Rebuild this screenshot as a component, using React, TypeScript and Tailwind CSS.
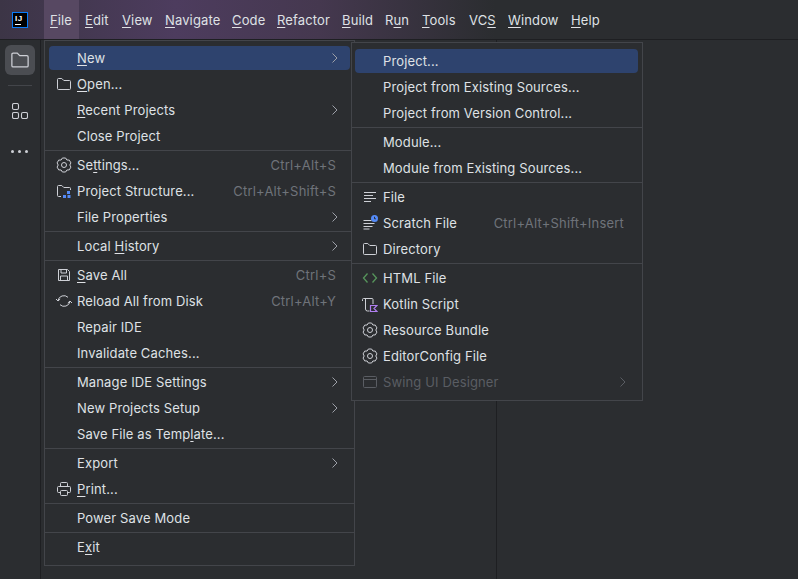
import type { ReactNode } from 'react';

const STROKE = '#ced0d6';

// 16x16 line icon wrapper
function Ico({ children, size = 16 }: { children: ReactNode; size?: number }) {
  return (
    <svg width={size} height={size} viewBox="0 0 16 16" fill="none" stroke={STROKE} strokeWidth="1" className="shrink-0">
      {children}
    </svg>
  );
}

const FolderIcon = ({ size = 16 }: { size?: number }) => (
  <Ico size={size}>
    <path d="M1.5 12.5v-9a1 1 0 0 1 1-1h3.3l2 2h5.7a1 1 0 0 1 1 1v7a1 1 0 0 1-1 1h-11a1 1 0 0 1-1-1z" />
  </Ico>
);

const GearIcon = () => (
  <Ico>
    <path
      strokeLinejoin="round"
      d="M6.4 1L9.6 1L10.9 3L13.3 3.1L14.9 5.9L13.8 8L14.9 10.1L13.3 12.9L10.9 13L9.6 15L6.4 15L5.1 13L2.7 12.9L1.1 10.1L2.2 8L1.1 5.9L2.7 3.1L5.1 3Z"
    />
    <circle cx="8" cy="8" r="2.5" />
  </Ico>
);

const StructureIcon = () => (
  <Ico>
    <path d="M5 13.5H2.5a1 1 0 0 1-1-1v-9a1 1 0 0 1 1-1h3.3l2 2h5.7a1 1 0 0 1 1 1V7" />
    <rect x="11" y="8" width="3" height="3" fill="#548af7" stroke="none" />
    <rect x="7" y="12" width="3" height="3" fill="#548af7" stroke="none" />
    <rect x="11.5" y="12" width="3" height="3" fill="#548af7" stroke="none" />
  </Ico>
);

const SaveIcon = () => (
  <Ico>
    <path d="M2.5 2.5h9l2 2v9h-11z" />
    <path d="M5 2.5v3.5h5.5v-3.5M4.5 13.5v-4.5h7v4.5" />
  </Ico>
);

const ReloadIcon = () => (
  <Ico>
    <path d="M2 7.5a6 6 0 0 1 10-3.2M14 8.5a6 6 0 0 1-10 3.2" />
    <path d="M0 6l2 2 2.2-2M11.8 10l2.2-2 2 2" />
  </Ico>
);

const FileLinesIcon = () => (
  <Ico>
    <path d="M2 3.5h12M2 6.5h9M2 9.5h12M2 12.5h7" />
  </Ico>
);

const ScratchIcon = () => (
  <Ico>
    <path d="M1.5 5.5h8M1.5 8.5h11M1.5 11.5h9M1.5 14h6" />
    <circle cx="12.5" cy="3.5" r="3.5" fill="#548af7" stroke="none" />
    <path d="M12.5 1.8v2h1.4" stroke="#2b2d30" />
  </Ico>
);

const HtmlIcon = () => (
  <Ico>
    <path d="M5.5 3.5L1.5 8l4 4.5M10.5 3.5l4 4.5-4 4.5" stroke="#57965c" strokeWidth="1.3" />
  </Ico>
);

const KotlinIcon = () => (
  <Ico>
    <path d="M3.5 3v10a2 2 0 0 0 2 2h2M0.5 5V3.5a1 1 0 0 1 1-1h8.5a1 1 0 0 1 1 1v4.5" />
    <path d="M8.5 9.5h6.5l-3 3 3 3h-6.5z" stroke="#b07ff0" strokeWidth="1.2" />
  </Ico>
);

const SwingIcon = () => (
  <svg width="16" height="16" viewBox="0 0 16 16" fill="none" stroke="#5a5d63" className="shrink-0">
    <rect x="1.5" y="2.5" width="13" height="11" rx="1" />
    <path d="M1.5 5.5h13" />
  </svg>
);

const PrintIcon = () => (
  <Ico>
    <path d="M4.5 5.5v-3a1 1 0 0 1 1-1h5a1 1 0 0 1 1 1v3" />
    <path d="M4 11.5H2.5a1 1 0 0 1-1-1v-4a1 1 0 0 1 1-1h11a1 1 0 0 1 1 1v4a1 1 0 0 1-1 1H12" />
    <rect x="4.5" y="9.5" width="7" height="5" rx="1" />
  </Ico>
);

function Chevron({ dim }: { dim?: boolean }) {
  return (
    <svg width="6" height="10" viewBox="0 0 6 10" fill="none" stroke={dim ? '#5a5d63' : '#9da0a8'} strokeWidth="1" className="-mr-[2px] ml-auto shrink-0">
      <path d="M0.5 0.5L5 5L0.5 9.5" />
    </svg>
  );
}

type Item = {
  label: ReactNode;
  icon?: ReactNode;
  shortcut?: string;
  arrow?: boolean;
  active?: boolean;
  disabled?: boolean;
};

function Row({ label, icon, shortcut, arrow, active, disabled }: Item) {
  return (
    <div className="flex h-[26px] items-center py-px">
      <div className={`flex h-6 w-full items-center rounded pl-[7px] pr-[14px] ${active ? 'bg-[#2e436e]' : ''}`}>
        <span className="w-4 shrink-0">{icon}</span>
        <span className={`ml-[5px] whitespace-nowrap pt-[2px] ${disabled ? 'text-[#5a5d63]' : 'text-[#dfe1e5]'}`}>{label}</span>
        {shortcut && <span className="ml-auto whitespace-nowrap pt-[2px] tracking-[0.2px] text-[#6f737a]">{shortcut}</span>}
        {arrow && <Chevron dim={disabled} />}
      </div>
    </div>
  );
}

const Sep = () => <div className="-mx-1 mt-px mb-[1px] h-px bg-[#43454a]" />;

const u = (before: string, ch: string, after: string) => (
  <>
    {before}
    <u className="underline-offset-2">{ch}</u>
    {after}
  </>
);

// prefix, mnemonic, suffix, width taken from the menu bar spacing
const menuBar: [string, string, string, string][] = [
  ['', 'F', 'ile', 'w-[35px]'],
  ['', 'E', 'dit', 'w-[37px]'],
  ['', 'V', 'iew', 'w-[43px]'],
  ['', 'N', 'avigate', 'w-[67px]'],
  ['', 'C', 'ode', 'w-[45px]'],
  ['', 'R', 'efactor', 'w-[65px]'],
  ['', 'B', 'uild', 'w-[43px]'],
  ['R', 'u', 'n', 'w-[37px]'],
  ['', 'T', 'ools', 'w-[47px]'],
  ['VC', 'S', '', 'w-[39px]'],
  ['', 'W', 'indow', 'w-[63px]'],
  ['', 'H', 'elp', 'w-[40px]'],
];

const fileGroups: Item[][] = [
  [
    { label: u('', 'N', 'ew'), arrow: true, active: true },
    { label: u('', 'O', 'pen...'), icon: <FolderIcon /> },
    { label: u('', 'R', 'ecent Projects'), arrow: true },
    { label: 'Close Project' },
  ],
  [
    { label: u('Se', 't', 'tings...'), icon: <GearIcon />, shortcut: 'Ctrl+Alt+S' },
    { label: 'Project Structure...', icon: <StructureIcon />, shortcut: 'Ctrl+Alt+Shift+S' },
    { label: 'File Properties', arrow: true },
  ],
  [{ label: u('Local ', 'H', 'istory'), arrow: true }],
  [
    { label: u('', 'S', 'ave All'), icon: <SaveIcon />, shortcut: 'Ctrl+S' },
    { label: 'Reload All from Disk', icon: <ReloadIcon />, shortcut: 'Ctrl+Alt+Y' },
    { label: 'Repair IDE' },
    { label: 'Invalidate Caches...' },
  ],
  [
    { label: 'Manage IDE Settings', arrow: true },
    { label: 'New Projects Setup', arrow: true },
    { label: u('Save File as Temp', 'l', 'ate...') },
  ],
  [
    { label: 'Export', arrow: true },
    { label: u('', 'P', 'rint...'), icon: <PrintIcon /> },
  ],
  [{ label: 'Power Save Mode' }],
  [{ label: u('E', 'x', 'it') }],
];

const newGroups: Item[][] = [
  [
    { label: 'Project...', active: true },
    { label: 'Project from Existing Sources...' },
    { label: 'Project from Version Control...' },
  ],
  [{ label: 'Module...' }, { label: 'Module from Existing Sources...' }],
  [
    { label: 'File', icon: <FileLinesIcon /> },
    { label: 'Scratch File', icon: <ScratchIcon />, shortcut: 'Ctrl+Alt+Shift+Insert' },
    { label: 'Directory', icon: <FolderIcon /> },
  ],
  [
    { label: 'HTML File', icon: <HtmlIcon /> },
    { label: 'Kotlin Script', icon: <KotlinIcon /> },
    { label: 'Resource Bundle', icon: <GearIcon /> },
    { label: 'EditorConfig File', icon: <GearIcon /> },
    { label: 'Swing UI Designer', icon: <SwingIcon />, arrow: true, disabled: true },
  ],
];

function Groups({ groups }: { groups: Item[][] }) {
  return (
    <>
      {groups.map((group, i) => (
        <div key={i}>
          {i > 0 && <Sep />}
          {group.map((item, j) => (
            <Row key={j} {...item} />
          ))}
        </div>
      ))}
    </>
  );
}

export default function App() {
  return (
    <div className="relative flex h-[579px] w-[798px] flex-col overflow-hidden bg-[#2b2d30] font-[Inter,sans-serif] text-[13px] tracking-[0.13px]">
      {/* Title bar */}
      <div className="flex h-10 shrink-0 items-stretch border-b border-[#1e1f22] bg-[linear-gradient(90deg,#3c3546_0%,#4d3c5e_22%,#45384f_40%,#2b2d30_62%)]">
        <div className="flex w-11 shrink-0 items-center justify-center pr-1">
          <div className="relative h-4 w-4 border border-[#087cfa] bg-black pt-[2px] pl-[2px]">
            <span className="block font-['Liberation_Sans',sans-serif] text-[8px] leading-[7px] font-bold tracking-[0.5px] text-white">IJ</span>
            <span className="absolute bottom-[2px] left-[2px] h-px w-[6px] bg-white" />
          </div>
        </div>
        {menuBar.map(([a, b, c, w], i) => (
          <div key={i} className={`flex items-center whitespace-nowrap pt-[2px] pl-1.5 text-[#dfe1e5] ${w} ${i === 0 ? 'bg-[#574862]' : ''}`}>
            <span>{u(a, b, c)}</span>
          </div>
        ))}
      </div>

      {/* Body */}
      <div className="flex min-h-0 flex-1">
        <div className="flex w-[41px] shrink-0 flex-col items-center border-r border-[#1e1f22] pt-[5px] pr-px">
          <div className="flex h-[30px] w-[30px] items-center justify-center rounded-md bg-[#4b4d52]">
            <FolderIcon size={20} />
          </div>
          <div className="mt-[10px] h-px w-6 bg-[#43454a]" />
          <div className="mt-[17px]">
            <svg width="16" height="16" viewBox="0 0 16 16" fill="none" stroke={STROKE} strokeWidth="1.1">
              <rect x="0.5" y="0.5" width="6" height="6" rx="1.5" />
              <rect x="0.5" y="9.5" width="6" height="6" rx="1.5" />
              <rect x="9.5" y="9.5" width="6" height="6" rx="1.5" />
            </svg>
          </div>
          <div className="mt-[31px] flex gap-[4px]">
            <span className="h-[3px] w-[3px] rounded-full bg-[#ced0d6]" />
            <span className="h-[3px] w-[3px] rounded-full bg-[#ced0d6]" />
            <span className="h-[3px] w-[3px] rounded-full bg-[#ced0d6]" />
          </div>
        </div>
        <div className="w-[456px] shrink-0 border-r border-[#1e1f22]" />
        <div className="flex-1" />
      </div>

      {/* File menu */}
      <div className="absolute top-10 left-11 w-[311px] border border-[#43454a] bg-[#2b2d30] px-1 pt-1 pb-[5px]">
        <Groups groups={fileGroups} />
      </div>

      {/* New submenu */}
      <div className="absolute top-[42px] left-[351px] w-[292px] border border-[#43454a] bg-[#2b2d30] pt-[5px] pr-1 pb-[5px] pl-[3px]">
        <Groups groups={newGroups} />
      </div>
    </div>
  );
}
